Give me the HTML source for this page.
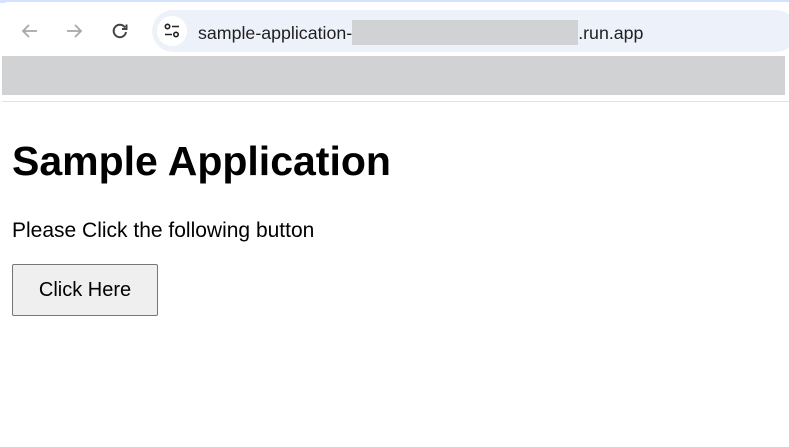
<!DOCTYPE html>
<html><head><meta charset="utf-8"><style>
*{margin:0;padding:0;box-sizing:border-box}
body{width:789px;height:447px;background:#fff;position:relative;overflow:hidden;font-family:"Liberation Sans",sans-serif}
.top{position:absolute;left:0;top:0;width:789px;height:3px;background:#d3e3fd}
.tb{position:absolute;left:0;top:2px;width:789px;height:54px;background:#fff;border-top-left-radius:8px}
.addr{position:absolute;left:152px;top:10px;width:645px;height:42px;background:#edf2fa;border-radius:21px}
.ic{position:absolute;left:157px;top:16px;width:30px;height:30px;border-radius:15px;background:#fff}
.url{position:absolute;left:198px;top:20px;font-size:17.8px;color:#1f1f1f;white-space:nowrap;line-height:22px}
.mask{display:inline-block;width:226px;height:25px;background:#d1d2d4;vertical-align:-6px}
.gray{position:absolute;left:2px;top:56px;width:783px;height:39px;background:#d1d2d4}
.line{position:absolute;left:2px;top:101px;width:787px;height:1px;background:#e3e3e3}
h1{position:absolute;left:12px;top:136px;font-size:41px;font-weight:bold;line-height:50px;color:#000;white-space:nowrap}
p{position:absolute;left:12px;top:217px;font-size:21px;line-height:28px;color:#000;white-space:nowrap}
button{position:absolute;left:12px;top:264px;width:146px;height:52px;background:#efefef;border:1px solid #767676;border-radius:2px;font-family:"Liberation Sans",sans-serif;font-size:20px;color:#000}
</style></head><body>
<div class="top"></div><div class="tb"></div>
<svg style="position:absolute;left:19px;top:21px" width="22" height="20" viewBox="0 0 22 20"><path d="M18 10H4M10 4L4 10L10 16" stroke="#a8a8a8" stroke-width="1.8" fill="none"/></svg>
<svg style="position:absolute;left:63px;top:21px" width="22" height="20" viewBox="0 0 22 20"><path d="M4 10H18M12 4L18 10L12 16" stroke="#a8a8a8" stroke-width="1.8" fill="none"/></svg>
<svg style="position:absolute;left:109px;top:20px" width="22" height="22" viewBox="0 0 22 22"><path d="M16 7.5A6.2 6.2 0 1 0 17 12" stroke="#444" stroke-width="2" fill="none"/><path d="M17.5 4.5V9H13" stroke="#444" stroke-width="2" fill="none"/></svg>
<div class="addr"></div><div class="ic"></div>
<svg style="position:absolute;left:163px;top:22px" width="18" height="18" viewBox="0 0 18 18"><circle cx="4.5" cy="4.5" r="2.2" stroke="#222" stroke-width="1.6" fill="none"/><path d="M9 4.5H16M2 12.5H9" stroke="#222" stroke-width="1.6"/><circle cx="13" cy="12.5" r="2.2" stroke="#222" stroke-width="1.6" fill="none"/></svg>
<div class="url">sample-application-<span class="mask"></span>.run.app</div>
<div class="gray"></div><div class="line"></div>
<h1>Sample Application</h1>
<p>Please Click the following button</p>
<button>Click Here</button>
</body></html>
